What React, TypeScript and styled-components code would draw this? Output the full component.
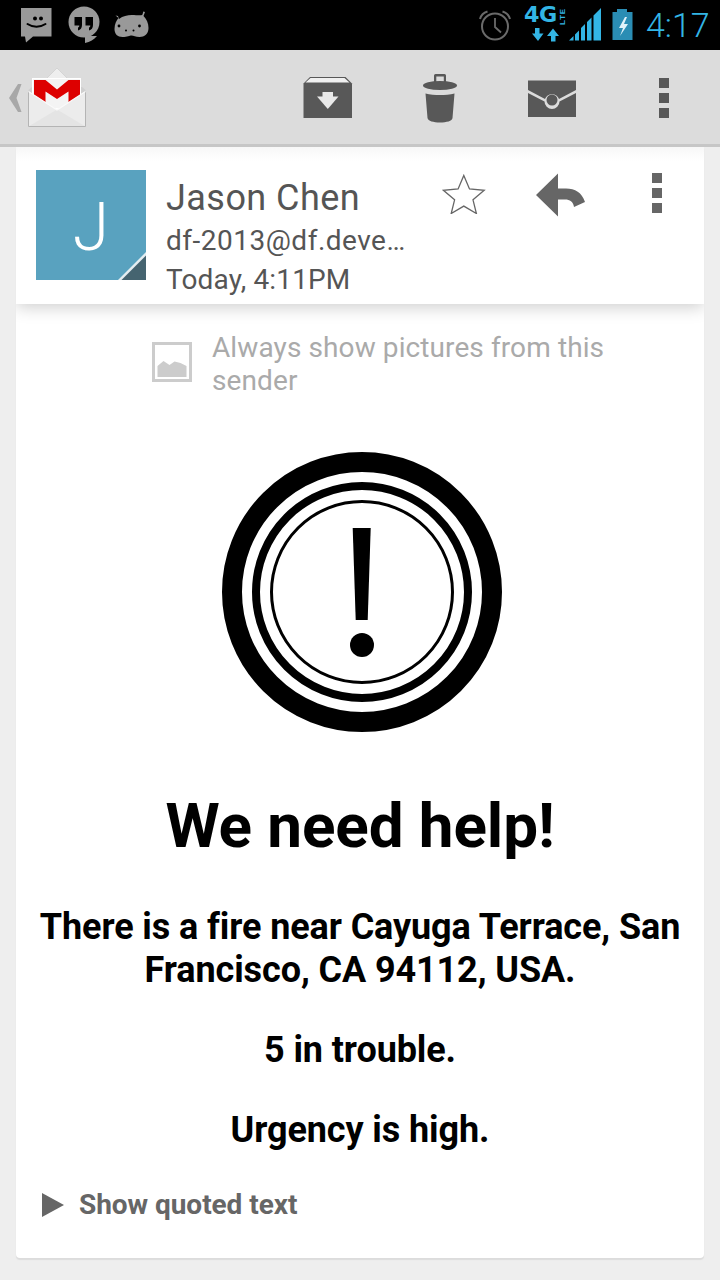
import React from "react";
import styled, { createGlobalStyle } from "styled-components";

const Global = createGlobalStyle`
  html, body { margin: 0; padding: 0; background: #eeeeee; }
  body { font-family: Roboto, "Liberation Sans", sans-serif; }
`;

const Page = styled.div`
  width: 720px;
  height: 1280px;
  overflow: hidden;
  display: flex;
  flex-direction: column;
  background: #eeeeee;
`;

const StatusBar = styled.div`
  height: 50px;
  flex: none;
  background: #000;
  display: flex;
  align-items: flex-start;
  color: #33b5e5;
`;

const Glyph = styled.svg<{ $ml: number; $mt: number }>`
  display: block;
  flex: none;
  margin-left: ${(p) => p.$ml}px;
  margin-top: ${(p) => p.$mt}px;
`;

const Spacer = styled.div`
  flex: 1;
`;

const Network = styled.div`
  width: 44px;
  margin-left: 11px;
  margin-top: 5px;
  display: flex;
  flex-direction: column;
  align-items: flex-start;
`;

const NetworkTop = styled.div`
  display: flex;
  align-items: flex-start;
  height: 22px;
`;

const FourG = styled.span`
  font-family: "DejaVu Sans", sans-serif;
  font-weight: 700;
  font-size: 21px;
  line-height: 20px;
  letter-spacing: -0.5px;
  width: 35px;
  transform: scaleX(1.06);
  transform-origin: left;
`;

const Lte = styled.span`
  font-family: "Liberation Sans", sans-serif;
  font-weight: 700;
  font-size: 8px;
  line-height: 8px;
  writing-mode: vertical-rl;
  transform: rotate(180deg);
  margin-top: 3px;
  letter-spacing: 0.8px;
`;

const Clock = styled.span`
  font-weight: 300;
  font-size: 34px;
  line-height: 50px;
  margin-left: 13px;
  width: 74px;
  height: 50px;
`;

const ActionBar = styled.div`
  height: 94px;
  flex: none;
  background: #dcdcdc;
  border-bottom: 3px solid #c6c6c6;
  display: flex;
  align-items: flex-start;
`;

const Card = styled.div`
  margin: 0 16px;
  height: 1111px;
  flex: none;
  background: #fff;
  border-radius: 0 0 4px 4px;
  box-shadow: 0 2px 1px #dcdcdc;
  display: flex;
  flex-direction: column;
`;

const Header = styled.div`
  height: 157px;
  flex: none;
  background: linear-gradient(#f7f7f7, #fff 14px);
  box-shadow: 0 3px 16px rgba(0, 0, 0, 0.2);
  clip-path: inset(0 0 -24px 0);
  display: flex;
  align-items: flex-start;
  position: relative;
`;

const Avatar = styled.div`
  width: 110px;
  height: 110px;
  margin: 23px 0 0 20px;
  background: #59a2bf;
  position: relative;
  overflow: hidden;
  flex: none;
  color: #fff;
  font-weight: 300;
  font-size: 66px;
  line-height: 116px;
  text-align: center;
`;

const Corner = styled.svg`
  position: absolute;
  right: 0;
  bottom: 0;
  display: block;
`;

const Meta = styled.div`
  margin: 29px 0 0 20px;
  width: 240px;
  flex: none;
  color: #555555;
  display: flex;
  flex-direction: column;
`;

const Name = styled.div`
  font-size: 36px;
  line-height: 44px;
  white-space: nowrap;
  letter-spacing: 0.45px;
`;

const MetaLine = styled.div<{ $ls: number; $mt?: number }>`
  font-size: 28px;
  line-height: 38px;
  white-space: nowrap;
  letter-spacing: ${(p) => p.$ls}px;
  margin-top: ${(p) => p.$mt ?? 0}px;
`;

const Pictures = styled.div`
  display: flex;
  align-items: flex-start;
  margin: 27px 0 0 136px;
  height: 89px;
`;

const PicturesText = styled.div`
  margin-left: 20px;
  width: 420px;
  color: #aaaaaa;
  font-size: 28px;
  line-height: 33px;
  letter-spacing: 0.1px;
`;

const Alert = styled.svg`
  display: block;
  align-self: flex-start;
  margin: 26px 0 0 200px;
`;

const Body = styled.div`
  color: #000;
  text-align: center;
  font-weight: 700;
`;

const Title = styled.h1`
  margin: 50px 0 0;
  font-size: 62px;
  line-height: 76px;
  font-weight: 700;
  letter-spacing: -0.1px;
`;

const Para = styled.p<{ $mt?: number }>`
  margin: 0;
  padding: 0 10px;
  font-size: 36px;
  line-height: 43px;
  font-weight: 700;
  letter-spacing: -0.1px;
  margin-top: ${(p) => p.$mt ?? 37}px;
`;

const Quoted = styled.div`
  margin: 35px 0 0 26px;
  display: flex;
  align-items: center;
  color: #666666;
  font-size: 28px;
  line-height: 36px;
  font-weight: 700;
`;

const QuotedLabel = styled.span`
  margin-left: 14px;
  letter-spacing: -0.05px;
`;

const ICON = "#999999";
const DARK = "#585858";
const MID = "#666666";

function Box(props: { x: number; y: number; w: number; h: number; ml: number; mt: number; children: React.ReactNode }) {
  return (
    <Glyph
      $ml={props.ml}
      $mt={props.mt}
      width={props.w}
      height={props.h}
      viewBox={`${props.x} ${props.y} ${props.w} ${props.h}`}
    >
      {props.children}
    </Glyph>
  );
}

export default function App() {
  return (
    <Page>
      <Global />
      <StatusBar>
        <Box x={20} y={7} w={33} h={36} ml={20} mt={7}>
          <path d="M21 8h30.5v28.5H33L26 42.5l-1-6h-4z" fill={ICON} />
          <circle cx={35} cy={18.5} r={2} fill="#000" />
          <circle cx={41} cy={18.5} r={2} fill="#000" />
          <path d="M27.5 24c5 3.5 13 3.5 18 0" stroke="#000" strokeWidth={2} fill="none" strokeLinecap="round" />
        </Box>
        <Box x={67} y={6} w={34} h={38} ml={14} mt={6}>
          <circle cx={84} cy={22} r={15.5} fill={ICON} />
          <path d="M85 36h12c-3 3.500-7 6-12 7z" fill={ICON} />
          <path d="M74.500 17h7.500v8c0 3-1.500 5-4 5.500v-3c1-.3 1.300-1 1.300-2h-4.800zM85.500 17h7.500v8c0 3-1.500 5-4 5.500v-3c1-.3 1.300-1 1.300-2h-4.800z" fill="#000" />
        </Box>
        <Box x={114} y={10} w={36} h={29} ml={13} mt={10}>
          <path d="M118 16l1 3c4-3 8-4 13-4s9 1 10.500-.500l.8-3 1.700.4-1.500 4.100c3 3 5 7 5 12 0 6-4 9-9 9-4 0-6-1.500-8-1.500s-4 1.500-9 1.500c-5 0-8-3-8-8 0-5 2-8.500 4-11l-3-2.500z" fill={ICON} />
          <circle cx={119} cy={26} r={1.400} fill="#000" />
          <circle cx={139.500} cy={26} r={1.400} fill="#000" />
          <circle cx={126} cy={30.500} r={1} fill="#000" />
          <circle cx={133.500} cy={30.500} r={1} fill="#000" />
        </Box>
        <Spacer />
        <Box x={477} y={9} w={35} h={34} ml={0} mt={9}>
          <circle cx={494} cy={26.500} r={13} stroke="#6a6a6a" strokeWidth={2} fill="none" />
          <path d="M494 18v9l6 5.500" stroke="#6a6a6a" strokeWidth={1.800} fill="none" />
          <path d="M479 19c1-4 4-6.500 7.500-7.500M509 19c-1-4-4-6.500-7.500-7.500" stroke="#6a6a6a" strokeWidth={2} fill="none" />
        </Box>
        <Network>
          <NetworkTop>
            <FourG>4G</FourG>
            <Lte>LTE</Lte>
          </NetworkTop>
          <Box x={530} y={28} w={30} h={14} ml={7} mt={1}>
            <path d="M534 28h4.500v5.500h4L537 41l-6-7.500h3z" fill="currentColor" />
            <path d="M552 28.500l6 7.500h-3.500v5.500H550V36h-4z" fill="currentColor" />
          </Box>
        </Network>
        <Box x={569} y={8} w={33} h={33} ml={1} mt={8}>
          <path d="M569 40.500l4.500-4.500v4.500zM575 40.500v-6l4-4v10zM581 40.500V28l4-4v16.500zM587 40.500V22l4.500-4.500v23zM593.500 40.500V15.500L601 8v32.500z" fill="currentColor" />
        </Box>
        <Box x={612} y={9} w={21} h={31} ml={10} mt={9}>
          <path d="M617 9h10v3h5.500v28H612.500V12H617z" fill="#2a8db4" />
          <path d="M625 17l-6 11h4l-3 8 8-12h-4l3-7z" fill="#dff2fa" />
        </Box>
        <Clock>4:17</Clock>
      </StatusBar>
      <ActionBar>
        <Box x={8} y={82} w={16} h={32} ml={8} mt={32}>
          <path d="M21.500 84l-5 14 5 14h-3.500L9 98l9-14z" fill="#a8a8a8" />
        </Box>
        <Box x={27} y={67} w={60} h={62} ml={3} mt={17}>
          <path d="M45 80l12-12 12 12z" fill="#eeeeee" stroke="#cfcfcf" strokeWidth={0.800} />
          <path d="M28.500 90l3.500-3h50l3.500 3v10h-57z" fill="#cfcfcf" />
          <rect x={32.500} y={78.500} width={48} height={30} fill="#f4f4f4" stroke="#fff" strokeWidth={1} />
          <path d="M34 80h11.500L57 89.500 68.500 80H80v24H68.500V91.500L57 99 45.500 91.500V104H34z" fill="#dd0000" />
          <path d="M28.500 91.500l28.500 18.500 28.500-18.500v35h-57z" fill="#ececec" />
          <path d="M28.500 126.500l28.500-17 28.500 17z" fill="#e4e4e4" />
          <path d="M28.500 91.500v35h57v-35" fill="none" stroke="#b4b4b4" strokeWidth={1} />
          <path d="M28.500 91.500l28.500 18.500 28.500-18.500" fill="none" stroke="#fafafa" strokeWidth={1.200} />
        </Box>
        <Box x={303} y={76} w={50} h={43} ml={216} mt={26}>
          <path d="M310 77h35.500l6.500 6.500v34.500H303.500V83.500z" fill={DARK} />
          <path d="M310.500 78l-5 4.500h44l-5-4.500z" fill="#f0f0f0" />
          <path d="M317 96.500h21.500l-10.700 12.500z" fill="#e9e9e9" />
          <rect x={322.500} y={92} width={10.500} height={6} fill="#e9e9e9" />
        </Box>
        <Box x={423} y={73} w={35} h={50} ml={70} mt={23}>
          <path d="M434 88V75.500a1.500 1.500 0 0 1 1.500-1.500h9a1.500 1.500 0 0 1 1.500 1.500V88h-2.200V76.500h-7.500V88z" fill={DARK} />
          <ellipse cx={440} cy={85.500} rx={17} ry={4.500} fill={DARK} />
          <path d="M425.500 93.500c9 2 20 2 29 0L452.500 118c-.2 3-6 4.500-12.500 4.500s-12-1.500-12.500-4.500z" fill={DARK} />
        </Box>
        <Box x={528} y={79} w={49} h={39} ml={70} mt={29}>
          <path d="M528 80.500h48v9.500L559 99a7.500 7.500 0 0 0-14 0l-17-9z" fill={DARK} />
          <path d="M528 93l16.500 8.500a7.500 7.500 0 0 0 15 0L576 93v24h-48z" fill={DARK} />
          <circle cx={552} cy={100} r={5.500} fill={DARK} />
        </Box>
        <Box x={659} y={78} w={11} h={41} ml={82} mt={28}>
          <path d="M659 78h10v10h-10zM659 93h10v10h-10zM659 108h10v10h-10z" fill={DARK} />
        </Box>
      </ActionBar>
      <Card>
        <Header>
          <Avatar>
            J
            <Corner width={28} height={28} viewBox="0 0 28 28">
              <path d="M28 0v28H0z" fill="#e4edf1" />
              <path d="M28 3.500V28H3.500z" fill="#456470" />
            </Corner>
          </Avatar>
          <Meta>
            <Name>Jason Chen</Name>
            <MetaLine $ls={0.5} $mt={2}>df-2013@df.deve…</MetaLine>
            <MetaLine $ls={0.15} $mt={1}>Today, 4:11PM</MetaLine>
          </Meta>
          <Box x={442} y={174} w={44} h={41} ml={36} mt={26}>
            <path d="M463.800 176.500l5.700 13.500 14.700 1.300-11.200 9.500 3.400 13.700-12.600-7.400-12.600 7.400 3.400-13.700-11.200-9.500 14.700-1.300z" fill="#fff" stroke={MID} strokeWidth={1.300} />
          </Box>
          <Box x={535} y={171} w={51} h={46} ml={49} mt={25}>
            <path d="M558 172.500v15h8c9 0 16 4 19 13.500l-11 5c-1-5.500-4-7.500-9-7.500h-7v17L536 194z" fill={MID} />
          </Box>
          <Box x={652} y={174} w={11} h={40} ml={66} mt={26}>
            <path d="M652 174h10v10h-10zM652 189h10v10h-10zM652 204h10v10h-10z" fill={MID} />
          </Box>
        </Header>
        <Pictures>
          <Box x={152} y={342} w={40} h={40} ml={0} mt={11}>
            <rect x={153.500} y={343.500} width={37} height={37} fill="#fff" stroke="#cccccc" strokeWidth={3} />
            <path d="M157.500 377v-11l6-5 6 4 5-3.500 6 1.500 6 3v11z" fill="#cccccc" />
          </Box>
          <PicturesText>Always show pictures from this sender</PicturesText>
        </Pictures>
        <Alert width={292} height={292} viewBox="216 446 292 292">
          <circle cx={362} cy={592} r={130} fill="none" stroke="#000" strokeWidth={20} />
          <circle cx={362} cy={592} r={106} fill="none" stroke="#000" strokeWidth={8} />
          <circle cx={362} cy={592} r={90.500} fill="none" stroke="#000" strokeWidth={3} />
          <path d="M352.700 528h18l-3 92h-12z" fill="#000" />
          <circle cx={362} cy={645} r={12} fill="#000" />
        </Alert>
        <Body>
          <Title>We need help!</Title>
          <Para $mt={42}>There is a fire near Cayuga Terrace, San Francisco, CA 94112, USA.</Para>
          <Para>5 in trouble.</Para>
          <Para>Urgency is high.</Para>
        </Body>
        <Quoted>
          <svg width={23} height={24} viewBox="0 0 23 24">
            <path d="M0 0l22 12L0 24z" fill="#666666" />
          </svg>
          <QuotedLabel>Show quoted text</QuotedLabel>
        </Quoted>
      </Card>
    </Page>
  );
}
